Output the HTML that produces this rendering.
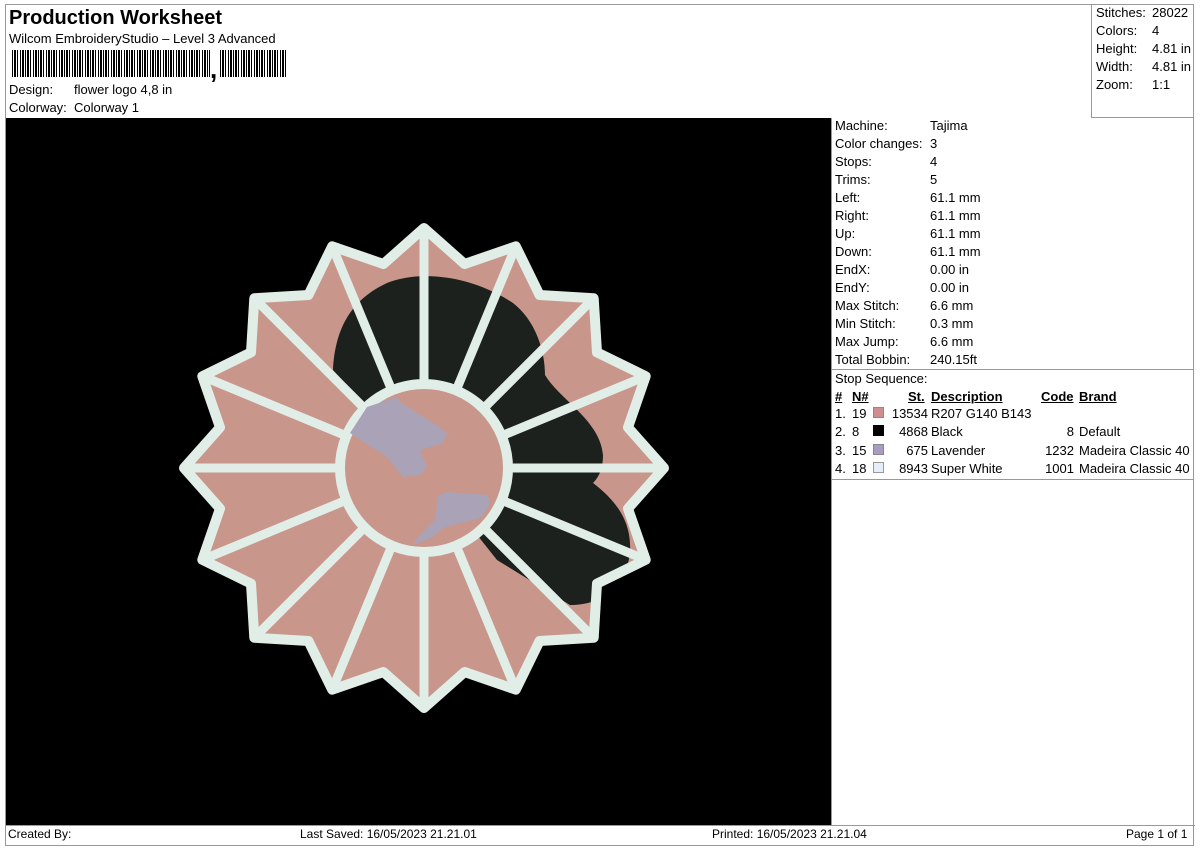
<!DOCTYPE html>
<html><head><meta charset="utf-8">
<style>
*{margin:0;padding:0;box-sizing:border-box}
body{width:1200px;height:848px;background:#fff;font-family:"Liberation Sans",Arial,sans-serif;color:#000;position:relative;overflow:hidden}
.abs{position:absolute}
.t{font-size:13px;line-height:18px;white-space:nowrap}
.frame{position:absolute;left:5px;top:4px;width:1189px;height:842px;border:1px solid #999}
.u{text-decoration:underline;font-weight:bold}
</style></head><body>
<div class="frame"></div>
<div class="abs" style="left:9px;top:5px;font-size:20px;font-weight:bold;line-height:26px">Production Worksheet</div>
<div class="abs t" style="left:9px;top:30px">Wilcom EmbroideryStudio – Level 3 Advanced</div>
<div class="abs" style="left:12px;top:50px;width:198px;height:27px;background:repeating-linear-gradient(90deg,#000 0 1px,#fff 1px 2px,#000 2px 4px,#fff 4px 5px,#000 5px 6px,#fff 6px 8px,#000 8px 9px,#fff 9px 10px,#000 10px 12px,#fff 12px 13px)"></div>
<div class="abs" style="left:210px;top:56px;font-size:26px;font-weight:bold;line-height:26px">,</div>
<div class="abs" style="left:220px;top:50px;width:67px;height:27px;background:repeating-linear-gradient(90deg,#000 0 1px,#fff 1px 2px,#000 2px 4px,#fff 4px 5px,#000 5px 6px,#fff 6px 8px,#000 8px 9px,#fff 9px 10px,#000 10px 12px,#fff 12px 13px)"></div>
<div class="abs t" style="left:9px;top:81px">Design:</div>
<div class="abs t" style="left:74px;top:81px">flower logo 4,8 in</div>
<div class="abs t" style="left:9px;top:99px">Colorway:</div>
<div class="abs t" style="left:74px;top:99px">Colorway 1</div>

<div class="abs" style="left:1091px;top:5px;width:1px;height:113px;background:#999"></div>
<div class="abs" style="left:1091px;top:117px;width:103px;height:1px;background:#999"></div>
<div class="abs t" style="left:1096px;top:4px;line-height:18px">Stitches:<br>Colors:<br>Height:<br>Width:<br>Zoom:</div>
<div class="abs t" style="left:1152px;top:4px;line-height:18px">28022<br>4<br>4.81 in<br>4.81 in<br>1:1</div>

<div class="abs" style="left:6px;top:118px;width:825px;height:707px;background:#000"></div>
<svg class="abs" style="left:0;top:0" width="1200" height="848" viewBox="0 0 1200 848">
<defs>
<clipPath id="fl"><polygon id="fp" points="664,468 628,508.6 645.7,559.8 597,583.6 593.7,637.7 539.6,641 515.8,689.7 464.6,672 424,708 383.4,672 332.2,689.7 308.4,641 254.3,637.7 251,583.6 202.3,559.8 220,508.6 184,468 220,427.4 202.3,376.2 251,352.4 254.3,298.3 308.4,295 332.2,246.3 383.4,264 424,228 464.6,264 515.8,246.3 539.6,295 593.7,298.3 597,352.4 645.7,376.2 628,427.4"/></clipPath>
</defs>
<use href="#fp" fill="#c8968b"/>
<g clip-path="url(#fl)">
<path d="M333,370 C335,330 350,300 387,283 C420,270 470,275 513,303 C535,320 545,350 545,375 C560,400 600,420 603,455 C603,470 598,478 593,483 C615,500 632,520 630,553 C625,590 600,605 570,605 L497,560 L424,468 Z" fill="#1c211d"/>
</g>
<g stroke="#e1eee7" stroke-width="9" stroke-linecap="round">
<line x1="424" y1="468" x2="664" y2="468"/><line x1="424" y1="468" x2="645.7" y2="559.8"/><line x1="424" y1="468" x2="593.7" y2="637.7"/><line x1="424" y1="468" x2="515.8" y2="689.7"/><line x1="424" y1="468" x2="424" y2="708"/><line x1="424" y1="468" x2="332.2" y2="689.7"/><line x1="424" y1="468" x2="254.3" y2="637.7"/><line x1="424" y1="468" x2="202.3" y2="559.8"/><line x1="424" y1="468" x2="184" y2="468"/><line x1="424" y1="468" x2="202.3" y2="376.2"/><line x1="424" y1="468" x2="254.3" y2="298.3"/><line x1="424" y1="468" x2="332.2" y2="246.3"/><line x1="424" y1="468" x2="424" y2="228"/><line x1="424" y1="468" x2="515.8" y2="246.3"/><line x1="424" y1="468" x2="593.7" y2="298.3"/><line x1="424" y1="468" x2="645.7" y2="376.2"/>
</g>
<use href="#fp" fill="none" stroke="#e1eee7" stroke-width="10" stroke-linejoin="round"/>
<circle cx="424" cy="468" r="84" fill="#c8968b" stroke="#e1eee7" stroke-width="10"/>
<polygon points="350,433 367,407 397,397 400,402 433,423 447,433 443,443 420,450 427,467 420,475 403,477 387,457" fill="#aaa3b8"/>
<polygon points="437,497 447,492 487,495 490,500 487,510 480,518 453,525 443,528 433,537 413,545 420,535 435,520 437,505" fill="#aaa3b8"/>
</svg>

<div class="abs" style="left:831px;top:118px;width:1px;height:707px;background:#999"></div>
<div class="abs t" style="left:835px;top:117px">Machine:<br>Color changes:<br>Stops:<br>Trims:<br>Left:<br>Right:<br>Up:<br>Down:<br>EndX:<br>EndY:<br>Max Stitch:<br>Min Stitch:<br>Max Jump:<br>Total Bobbin:</div>
<div class="abs t" style="left:930px;top:117px">Tajima<br>3<br>4<br>5<br>61.1 mm<br>61.1 mm<br>61.1 mm<br>61.1 mm<br>0.00 in<br>0.00 in<br>6.6 mm<br>0.3 mm<br>6.6 mm<br>240.15ft</div>
<div class="abs" style="left:831px;top:369px;width:363px;height:1px;background:#999"></div>
<div class="abs t" style="left:835px;top:370px">Stop Sequence:</div>
<div class="abs t u" style="left:835px;top:388px">#</div>
<div class="abs t u" style="left:852px;top:388px">N#</div>
<div class="abs t u" style="left:908px;top:388px">St.</div>
<div class="abs t u" style="left:931px;top:388px">Description</div>
<div class="abs t u" style="left:1041px;top:388px">Code</div>
<div class="abs t u" style="left:1079px;top:388px">Brand</div>
<div class="abs t" style="left:835px;top:405px;line-height:18.3px">1.<br>2.<br>3.<br>4.</div>
<div class="abs t" style="left:852px;top:405px;line-height:18.3px">19<br>8<br>15<br>18</div>
<div class="abs" style="left:873px;top:407px;width:11px;height:11px;background:#d08d90;border:1px solid #b77"></div>
<div class="abs" style="left:873px;top:425px;width:11px;height:11px;background:#000"></div>
<div class="abs" style="left:873px;top:444px;width:11px;height:11px;background:#a89cc4;border:1px solid #888"></div>
<div class="abs" style="left:873px;top:462px;width:11px;height:11px;background:#e8eef8;border:1px solid #999"></div>
<div class="abs t" style="left:884px;top:405px;width:44px;text-align:right;line-height:18.3px">13534<br>4868<br>675<br>8943</div>
<div class="abs t" style="left:931px;top:405px;line-height:18.3px">R207 G140 B143<br>Black<br>Lavender<br>Super White</div>
<div class="abs t" style="left:1030px;top:405px;width:44px;text-align:right;line-height:18.3px">&nbsp;<br>8<br>1232<br>1001</div>
<div class="abs t" style="left:1079px;top:405px;line-height:18.3px">&nbsp;<br>Default<br>Madeira Classic 40<br>Madeira Classic 40</div>
<div class="abs" style="left:831px;top:479px;width:363px;height:1px;background:#999"></div>

<div class="abs" style="left:5px;top:825px;width:1190px;height:1px;background:#999"></div>
<div class="abs t" style="left:8px;top:825px;font-size:12px;line-height:18px">Created By:</div>
<div class="abs t" style="left:300px;top:825px;font-size:12px;line-height:18px">Last Saved: 16/05/2023 21.21.01</div>
<div class="abs t" style="left:712px;top:825px;font-size:12px;line-height:18px">Printed: 16/05/2023 21.21.04</div>
<div class="abs t" style="left:1126px;top:825px;font-size:12px;line-height:18px">Page 1 of 1</div>
</body></html>
